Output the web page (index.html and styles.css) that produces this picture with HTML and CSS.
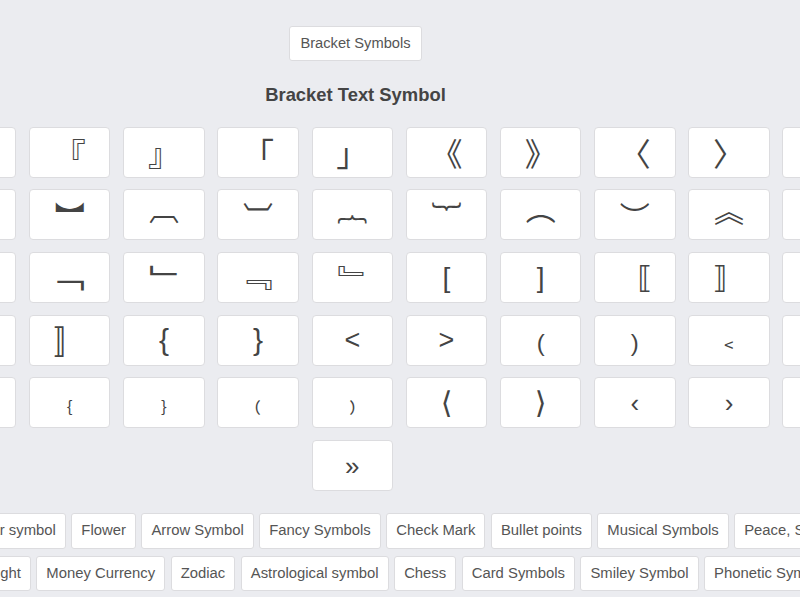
FILE: index.html
```html
<!DOCTYPE html>
<html lang="en">
<head>
<meta charset="utf-8">
<title>Bracket Text Symbol</title>
<link rel="stylesheet" href="styles.css">
</head>
<body>
<div class="page">
  <a class="pill" href="#">Bracket Symbols</a>
  <h1 class="title">Bracket Text Symbol</h1>
  <div class="grid">
    <div class="card cjk">【</div><div class="card cjk">】</div><div class="card cjk">『</div><div class="card cjk">』</div><div class="card cjk">「</div><div class="card cjk">」</div><div class="card cjk">《</div><div class="card cjk">》</div><div class="card cjk">〈</div><div class="card cjk">〉</div><div class="card cjk">〔</div>
    <div class="card cjk">〕</div><div class="card vert up">︻</div><div class="card vert">︼</div><div class="card vert up">︹</div><div class="card vert">︺</div><div class="card vert up">︷</div><div class="card vert">︸</div><div class="card vert up">︵</div><div class="card vert">︶</div><div class="card vert up2">︽</div><div class="card vert">︾</div>
    <div class="card vert">﹀</div><div class="card vert up2">︿</div><div class="card vert up3 nudge-l"><span class="wide">﹁</span></div><div class="card vert nudge-r"><span class="wide">﹂</span></div><div class="card vert up3 nudge-l"><span class="wide">﹃</span></div><div class="card vert nudge-r"><span class="wide">﹄</span></div><div class="card sq">[</div><div class="card sq">]</div><div class="card dv open">⟦</div><div class="card dv close">⟧</div><div class="card cjk">〘</div>
    <div class="card cjk">〙</div><div class="card cjk">〚</div><div class="card cjk">〛</div><div class="card">{</div><div class="card">}</div><div class="card angle">&lt;</div><div class="card angle">&gt;</div><div class="card paren">(</div><div class="card paren">)</div><div class="card small">﹤</div><div class="card small">﹥</div>
    <div class="card small">﹝</div><div class="card small">﹞</div><div class="card small">﹛</div><div class="card small">﹜</div><div class="card small">﹙</div><div class="card small">﹚</div><div class="card dv">⟨</div><div class="card dv">⟩</div><div class="card quote">‹</div><div class="card quote">›</div><div class="card quote">«</div>
    <div class="card quote">»</div>
  </div>
  <nav class="tags">
    <a class="tag" href="#">Love heart</a>
    <a class="tag" href="#">Star symbol</a>
    <a class="tag" href="#">Flower</a>
    <a class="tag" href="#">Arrow Symbol</a>
    <a class="tag" href="#">Fancy Symbols</a>
    <a class="tag" href="#">Check Mark</a>
    <a class="tag" href="#">Bullet points</a>
    <a class="tag" href="#">Musical Symbols</a>
    <a class="tag" href="#">Peace, Stars</a>
    <span class="break"></span>
    <a class="tag" href="#">Bubbles</a>
    <a class="tag" href="#">Copyright</a>
    <a class="tag" href="#">Money Currency</a>
    <a class="tag" href="#">Zodiac</a>
    <a class="tag" href="#">Astrological symbol</a>
    <a class="tag" href="#">Chess</a>
    <a class="tag" href="#">Card Symbols</a>
    <a class="tag" href="#">Smiley Symbol</a>
    <a class="tag" href="#">Phonetic Symbols</a>
  </nav>
</div>
</body>
</html>
```
FILE: styles.css
```css
html, body {
  margin: 0;
  padding: 0;
  overflow: hidden;
  background: #ebecf0;
}

body {
  font-family: "Liberation Sans", Arial, sans-serif;
  color: #555;
}

.page {
  width: 711px;
  display: flex;
  flex-direction: column;
  align-items: center;
  padding-top: 25.7px;
}

.pill,
.tag {
  display: block;
  box-sizing: border-box;
  background: #fff;
  border: 1px solid #dcdcdf;
  border-radius: 3px;
  color: #555;
  text-decoration: none;
  font-size: 14.85px;
  line-height: 19.5px;
  padding: 7px 9px;
  white-space: nowrap;
}

.pill {
  font-size: 14.7px;
  padding: 7px 10px;
}

.title {
  margin: 22.4px 0 0;
  font-size: 18.4px;
  line-height: 21px;
  font-weight: bold;
  color: #444;
}

.grid {
  flex: none;
  width: 1060px;
  margin-top: 22.1px;
  display: flex;
  flex-wrap: wrap;
  justify-content: center;
  gap: 11.7px 6.3px;
}

.card {
  box-sizing: border-box;
  width: 81.5px;
  height: 51px;
  margin-right: 6.4px;
  background: #fff;
  border: 1px solid #dcdcdf;
  border-radius: 4px;
  display: flex;
  align-items: center;
  justify-content: center;
  font-family: "Liberation Sans", Arial, sans-serif;
  font-size: 30px;
  line-height: 1;
  color: #444;
}

.card.cjk {
  font-family: "Noto Sans CJK JP", sans-serif;
  font-size: 32px;
}

.card.vert {
  font-family: "Noto Sans CJK JP", sans-serif;
  font-size: 30px;
}

.card.up {
  padding-bottom: 15px;
}

.card.up2 {
  padding-bottom: 11px;
}

.card.up3 {
  padding-bottom: 8px;
}

.card.nudge-l {
  padding-right: 8px;
}

.card.nudge-r {
  padding-left: 8px;
}

.wide {
  display: inline-block;
  transform: scaleX(1.25);
}

.card.small {
  font-family: "Noto Sans CJK JP", sans-serif;
  font-size: 22px;
}

.card.dv {
  font-family: "DejaVu Sans", sans-serif;
  font-size: 30px;
}

.card.open {
  padding-left: 20px;
}

.card.close {
  padding-right: 18px;
}

.card.sq {
  font-size: 28px;
}

.card.angle {
  font-size: 27px;
}

.card.paren {
  font-size: 24px;
  padding-top: 5px;
}

.card.quote {
  font-size: 26px;
}

.tags {
  flex: none;
  width: 1200px;
  margin-top: 22.3px;
  display: flex;
  flex-wrap: wrap;
  justify-content: center;
}

.tag {
  margin: 0 2.75px 6.7px;
}

.break {
  flex-basis: 100%;
  height: 0;
}
```
